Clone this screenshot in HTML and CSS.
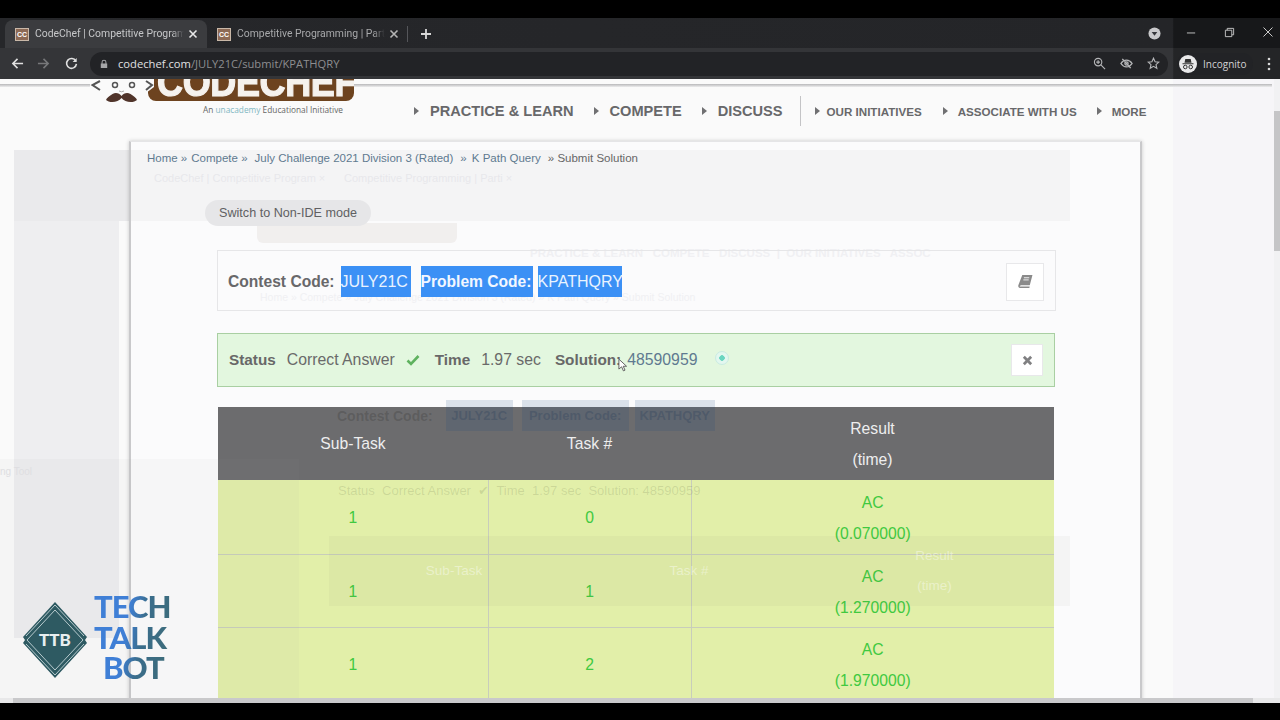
FILE: index.html
```html
<!DOCTYPE html>
<html lang="en">
<head>
<meta charset="utf-8">
<title>CodeChef submission</title>
<link rel="stylesheet" href="styles.css">
</head>
<body>
<div class="screen">
  <div class="topblack"></div>
  <div class="tabstrip">
    <div class="tab active">
      <span class="favicon">CC</span>
      <span class="tabtitle">CodeChef | Competitive Program</span>
      <svg class="tabx" viewBox="0 0 10 10"><path d="M1.500 1.500l7 7M8.500 1.500l-7 7"/></svg>
    </div>
    <div class="tab second">
      <span class="favicon">CC</span>
      <span class="tabtitle dim">Competitive Programming | Parti</span>
      <svg class="tabx dimx" viewBox="0 0 10 10"><path d="M1.500 1.500l7 7M8.500 1.500l-7 7"/></svg>
    </div>
    <span class="tabsep"></span>
    <svg class="newtab" viewBox="0 0 12 12"><path d="M6 1v10M1 6h10"/></svg>
    <span class="stripfill"></span>
    <svg class="downcirc" viewBox="0 0 14 14"><circle cx="7" cy="7" r="6.500"/><path d="M4 5.500h6l-3 4z"/></svg>
    <div class="winctl">
      <svg viewBox="0 0 12 12"><path d="M1 6.500h9"/></svg>
      <svg viewBox="0 0 12 12"><path d="M1.500 3.500h7v7h-7zM3.500 3.500v-2h7v7h-2"/></svg>
      <svg viewBox="0 0 12 12"><path d="M1.500 1.500l9 9M10.500 1.500l-9 9"/></svg>
    </div>
  </div>
  <div class="toolbar">
    <svg class="tbicon back" viewBox="0 0 14 14"><path d="M13 7H2M7 2L2 7l5 5"/></svg>
    <svg class="tbicon fwd" viewBox="0 0 14 14"><path d="M1 7h11M7 2l5 5-5 5"/></svg>
    <svg class="tbicon reload" viewBox="0 0 14 14"><path d="M11.600 4.200A5.300 5.300 0 1 0 12.300 7.500"/><path class="fillp" d="M12.600 1v4.400H8.200z"/></svg>
    <div class="omnibox">
      <svg class="lock" viewBox="0 0 10 12"><path d="M2 5.500V3.600a3 3 0 0 1 6 0v1.900h1V11H1V5.500zM3.200 5.500h3.600V3.600a1.800 1.800 0 0 0-3.600 0z"/></svg>
      <span class="url"><span class="host">codechef.com</span>/JULY21C/submit/KPATHQRY</span>
      <span class="stripfill"></span>
      <svg class="omicon" viewBox="0 0 14 14"><circle cx="5.500" cy="5.500" r="4"/><path d="M8.500 8.500L13 13M3.500 5.500h4M5.500 3.500v4"/></svg>
      <svg class="omicon thick" viewBox="0 0 14 14"><path d="M1 7s2.300-3.600 6-3.600S13 7 13 7s-2.300 3.600-6 3.600S1 7 1 7zM2.500 2l9 10"/><circle cx="7" cy="7" r="1.700"/></svg>
      <svg class="omicon" viewBox="0 0 14 14"><path d="M7 1.300l1.700 3.800 4 .4-3 2.700.9 4L7 10.100l-3.600 2.100.9-4-3-2.700 4-.4z"/></svg>
    </div>
    <div class="incog">
      <svg viewBox="0 0 18 18"><circle cx="9" cy="9" r="9" class="incbg"/><path class="incfg" d="M3.500 8.200h11v1h-11zM5.500 7.700L6.300 4h5.400l.8 3.700z"/><circle class="incring" cx="6.300" cy="12" r="1.800"/><circle class="incring" cx="11.700" cy="12" r="1.800"/></svg>
      <span>Incognito</span>
    </div>
    <svg class="kebab" viewBox="0 0 4 14"><circle cx="2" cy="2" r="1.300"/><circle cx="2" cy="7" r="1.300"/><circle cx="2" cy="12" r="1.300"/></svg>
  </div>

  <div class="viewport">
    <div class="ghosts">
      <div class="g-column"></div>
      <div class="g-right"></div>
      <div class="g-browser">
        <span class="g-t1">CodeChef | Competitive Program ×</span>
        <span class="g-t2">Competitive Programming | Parti ×</span>
      </div>
      <span class="g-lefttext">ng Tool</span>
      <div class="g-logo"></div>
      <span class="g-nav">PRACTICE &amp; LEARN &nbsp; COMPETE &nbsp; DISCUSS &nbsp;| &nbsp;OUR INITIATIVES &nbsp; ASSOC</span>
      <span class="g-crumb">Home » Compete » July Challenge 2021 Division 3 (Rated) » K Path Query » Submit Solution</span>
    </div>

    <div class="page">
      <header class="sitehead">
        <div class="logo">
          <div class="logobar"><span>CODECHEF</span></div>
          <svg class="chef" viewBox="0 0 70 32">
            <path class="chefw" d="M2 0H66V8L58 14 52 26H14L8 14 2 8Z"/>
            <path class="chefd" d="M12 2L4.500 6 12 11M58 2L64 6 58 11"/>
            <circle class="chefd" cx="27" cy="6" r="2.500"/><circle class="chefd" cx="44" cy="6" r="2.500"/>
            <path class="chefn" d="M31 12q2.500 1.500 5 0"/>
            <path class="chefb" d="M33.500 17c-2-3-6-4-9-2-3 2-6 4-6.500 6 3 3 12 3 15.500-2 3.500 5 12.500 5 15.500 2-.5-2-3.500-4-6.500-6-3-2-7-1-9 2z"/>
          </svg>
          <div class="tagline">An <span class="una">unacademy</span> Educational Initiative</div>
        </div>
        <nav class="mainnav">
          <a class="big n1">PRACTICE &amp; LEARN</a>
          <a class="big n2">COMPETE</a>
          <a class="big n3">DISCUSS</a>
          <span class="navdiv"></span>
          <a class="small n4">OUR INITIATIVES</a>
          <a class="small n5">ASSOCIATE WITH US</a>
          <a class="small n6">MORE</a>
        </nav>
      </header>

      <main class="card">
        <div class="crumbs"><span class="c c1">Home »</span><span class="c c2">Compete »</span><span class="c c3">July Challenge 2021 Division 3 (Rated)</span><span class="c c4">»</span><span class="c c5">K Path Query</span><span class="c c6">» Submit Solution</span></div>
        <button class="pill">Switch to Non-IDE mode</button>
        <section class="codebox">
          <b class="lbl">Contest Code:</b>
          <span class="sel v1">JULY21C</span>
          <b class="sel v2">Problem Code:</b>
          <span class="sel v3">KPATHQRY</span>
          <span class="stripfill"></span>
          <span class="sqbtn big-sq">
            <svg viewBox="0 0 14 14"><path class="bookb" d="M4 1h9.500l-2.500 9.500H3c-1 0-1.500.8-1.300 1.200h9.200l-.3 1.300H2c-1.500 0-2-1.300-1.700-2.500z"/><path class="bookl" d="M5.500 3.500h5M5 5.500h5"/></svg>
          </span>
        </section>
        <section class="statusbox">
          <b>Status</b><span class="sv1">Correct Answer</span>
          <svg class="tick" viewBox="0 0 14 12"><path d="M1.500 6.500l3.500 3.500 7.500-8"/></svg>
          <b class="s2">Time</b><span class="sv2">1.97 sec</span>
          <b class="s3">Solution:</b><span class="sol">48590959</span>
          <span class="dot"></span>
          <span class="stripfill"></span>
          <span class="sqbtn x-sq"><svg viewBox="0 0 12 12"><path d="M2 2l8 8M10 2l-8 8"/></svg></span>
        </section>
        <table class="results">
          <thead><tr><th class="w1">Sub-Task</th><th class="w2">Task #</th><th>Result<br>(time)</th></tr></thead>
          <tbody>
            <tr class="r1"><td>1</td><td>0</td><td>AC<br>(0.070000)</td></tr>
            <tr><td>1</td><td>1</td><td>AC<br>(1.270000)</td></tr>
            <tr><td>1</td><td>2</td><td>AC<br>(1.970000)</td></tr>
          </tbody>
        </table>
      </main>
    </div>

    <div class="ghosts top">
      <div class="g-band"></div>
      <div class="g-code"><b>Contest Code:</b><i class="i1">JULY21C</i><i class="i2">Problem Code:</i><i class="i3">KPATHQRY</i></div>
      <span class="g-status">Status &nbsp;Correct Answer &nbsp;✔ &nbsp;Time &nbsp;1.97 sec &nbsp;Solution: 48590959</span>
      <div class="g-thead"><span>Sub-Task</span><span>Task #</span><span>Result<br>(time)</span></div>
    </div>

    <svg class="cursor" viewBox="0 0 10 15"><path d="M1 1v11l3-2.500 2 4.500 1.800-.8-2-4.300H9.500z"/></svg>
    <div class="vscroll"><span class="thumb"></span></div>
    <div class="brand">
      <svg class="diamond" viewBox="0 0 64 76">
        <path class="dfill" d="M32 0L64 35 62 38 64 41 32 76 0 41 2 38 0 35Z"/>
        <path class="dline" d="M32 8L60 38 32 68 4 38ZM3 34L32 3 61 34M3 42L32 73 61 42"/>
      </svg>
      <span class="dtext">TTB</span>
      <div class="brandtext"><span>TECH</span><span>TALK</span><span class="bot">BOT</span></div>
    </div>
  </div>
  <div class="hscroll"><span class="hthumb"></span></div>
  <div class="botblack"></div>
</div>
</body>
</html>
```
FILE: styles.css
```css
* { box-sizing: border-box; }
html, body { margin: 0; height: 100%; background: #000; overflow: hidden; }
body { font-family: "Liberation Sans", Arial, sans-serif; }
.screen { width: 1280px; height: 720px; display: flex; flex-direction: column; position: relative; overflow: hidden; }
.topblack { height: 18px; background: #000; flex: none; }
.botblack { height: 17px; background: #000; flex: none; }
.stripfill { flex: 1; }

.tabstrip { height: 30px; flex: none; background: linear-gradient(90deg, #26272a, #242528 91.600%, #17181a 91.700%); display: flex; align-items: flex-end; padding-left: 5px; }
.tab { width: 202px; height: 28px; display: flex; align-items: center; padding: 0 9px 0 10px; border-radius: 8px 8px 0 0; }
.tab.active { background: #3b3c3f; }
.tab.second { width: 200px; padding-right: 8px; }
.favicon { width: 14px; height: 13px; background: #8d6a55; border: 1px solid #c9b8a8; color: #fff; font: bold 7px/11px "Liberation Sans", sans-serif; text-align: center; flex: none; }
.tabtitle { margin-left: 6px; font: 10.400px/14px Roboto, sans-serif; color: #c6c7c9; white-space: nowrap; overflow: hidden; flex: 1; -webkit-mask-image: linear-gradient(90deg, #000 92%, transparent); mask-image: linear-gradient(90deg, #000 92%, transparent); }
.tabtitle.dim { color: #a8a9ab; }
.tabx { width: 10px; height: 10px; flex: none; margin-left: 4px; fill: none; stroke: #e8e8e8; stroke-width: 1.600; }
.tabx.dimx { stroke: #b5b5b5; }
.tabsep { width: 1px; height: 16px; background: #55565a; margin: 0 0 6px 0; }
.newtab { width: 12px; height: 12px; margin: 0 0 8px 12px; fill: none; stroke: #d8d8d8; stroke-width: 1.800; }
.downcirc { width: 13px; height: 13px; margin-bottom: 8px; fill: #c9c9cb; flex: none; }
.downcirc path { fill: #35363a; }
.winctl { display: flex; width: 107px; margin-left: 12px; justify-content: space-between; padding: 0 6px 2px 13px; height: 30px; align-items: center; flex: none; }
.winctl svg { width: 11px; height: 11px; fill: none; stroke: #c9c9c9; stroke-width: 1; }
.winctl svg:last-child { width: 12px; height: 12px; }

.toolbar { height: 31px; flex: none; background: linear-gradient(90deg, #343538, #343538 91.600%, #242527 91.700%); display: flex; align-items: center; padding-left: 11px; }
.tbicon { width: 13px; height: 13px; fill: none; stroke: #e0e0e0; stroke-width: 1.700; flex: none; }
.tbicon.fwd { margin-left: 13px; stroke: #77787a; }
.tbicon.reload { margin-left: 15px; }
.tbicon .fillp { fill: #e0e0e0; stroke: none; }
.omnibox { width: 1078px; height: 24px; margin-left: 12px; border-radius: 12px; background: #222326; display: flex; align-items: center; padding: 0 8px 0 10px; flex: none; }
.lock { width: 8px; height: 10px; fill: #a5a6a8; flex: none; }
.url { margin-left: 10px; font: 11.200px/16px "Open Sans", sans-serif; color: #8d8e90; white-space: nowrap; }
.host { color: #e0e0e2; }
.omicon { width: 13px; height: 13px; fill: none; stroke: #b5b6b8; stroke-width: 1.200; margin-left: 14px; flex: none; }
.omicon.thick { stroke-width: 1.500; }
.incog { width: 76px; height: 22px; margin-left: 9px; border-radius: 11px; background: #222326; display: flex; align-items: center; padding-left: 2px; color: #d2d2d4; font: 10px/14px "Open Sans", sans-serif; flex: none; }
.incog svg { width: 18px; height: 18px; margin-right: 6px; flex: none; }
.incbg { fill: #e9e9ea; }
.incfg { fill: #333; }
.incring { fill: none; stroke: #333; stroke-width: 1; }
.kebab { width: 4px; height: 14px; margin-left: 14px; fill: #d8d8d8; flex: none; }

.viewport { flex: 1; min-height: 0; position: relative; overflow: hidden; background: #fafafa; }
.page { position: relative; z-index: 2; height: 100%; overflow: hidden; }

.sitehead { height: 62px; display: flex; align-items: flex-start; position: relative; }
.sitehead::before { content: ""; position: absolute; left: 0; right: 8px; top: 5px; height: 3px; background: linear-gradient(#b8b8ba, #ececed); }
.logo { position: relative; width: 270px; margin-left: 88px; height: 40px; flex: none; }
.chef { position: absolute; left: 0; top: 0; width: 70px; height: 32px; }
.chefw { fill: #fafafa; }
.chefd { fill: none; stroke: #555; stroke-width: 2; }
circle.chefd { fill: #fff; stroke-width: 1.500; }
.chefn { fill: none; stroke: #aaa; stroke-width: 1; }
.chefb { fill: #50342a; }
.logobar { position: absolute; left: 60px; top: 0; width: 206px; height: 22px; background: #6d431f; border-radius: 0 0 8px 8px; overflow: hidden; }
.logobar span { position: absolute; left: 9px; top: -17px; font: 900 40px/40px "Liberation Sans", sans-serif; color: #f5f2ee; letter-spacing: -.4px; white-space: nowrap; -webkit-text-stroke: 1.200px #f5f2ee; transform: scaleX(.9); transform-origin: left; }
.tagline { position: absolute; left: 115px; top: 25px; font: 8.300px/12px "Open Sans", sans-serif; color: #666; white-space: nowrap; }
.una { color: #7fb7c2; }

.mainnav { position: relative; display: flex; align-items: center; height: 30px; margin: 17px 0 0 56px; color: #68686a; font-weight: bold; white-space: nowrap; }
.mainnav a { display: flex; align-items: center; }
.mainnav a::before { content: ""; border-left: 5px solid #707072; border-top: 4px solid transparent; border-bottom: 4px solid transparent; margin-right: 11px; }
.big { font-size: 14.600px; }
.small { font-size: 11.600px; }
.n2 { margin-left: 20px; }
.n3 { margin-left: 20px; }
.navdiv { width: 1px; height: 30px; background: #c4c4c6; margin: 0 14px 0 17px; }
.n5 { margin-left: 21px; }
.n6 { margin-left: 20px; }
.mainnav .n4::before { margin-right: 7px; }
.mainnav .n5::before, .mainnav .n6::before { margin-right: 10px; }

.card { position: relative; width: 1013px; margin: 0 0 0 129px; padding: 5px 86px 0 87px; height: 700px; background: rgba(252,252,253,.55); border: solid #c9c9cb; border-width: 1px 2px 0 2px; border-top-color: #e5e5e7; box-shadow: 0 0 4px rgba(0,0,0,.2); }
.crumbs { position: relative; margin-left: -71px; height: 22px; display: flex; align-items: center; font-size: 11.500px; color: #5f7a90; white-space: nowrap; }
.c2 { margin-left: 4px; }
.c3 { margin-left: 7px; }
.c4 { margin-left: 7px; }
.c5 { margin-left: 5px; }
.c6 { margin-left: 7px; color: #666; }
.pill { display: block; width: 166px; height: 26px; margin: 31px 0 0 -13px; border: 0; border-radius: 13px; background: #e6e6e8; color: #606062; font: 12.600px/26px "Liberation Sans", sans-serif; padding: 0; }
.codebox { width: 839px; height: 61px; margin: 24px 0 0 -1px; border: 1px solid #e6e6e8; display: flex; align-items: center; padding: 2px 11px 0 10px; color: #666; font-size: 16px; white-space: nowrap; }
.lbl { margin-right: 6px; color: #68686a; font-size: 15.600px; }
.sel { background: #3b90f5; color: #e9f3ff; height: 31px; line-height: 31px; }
.v1 { width: 70px; font-size: 16px; overflow: hidden; }
.v2 { margin-left: 10px; width: 112px; font-size: 15.600px; color: #f2f7ff; }
.v3 { margin-left: 5px; width: 84px; font-size: 16px; overflow: hidden; }
.sqbtn { background: #fff; border: 1px solid #e8e8ea; display: flex; align-items: center; justify-content: center; flex: none; }
.big-sq { width: 38px; height: 38px; }
.big-sq svg { width: 15px; height: 15px; }
.bookb { fill: #8a8a8a; }
.bookl { fill: none; stroke: #fff; stroke-width: .8; }
.statusbox { width: 838px; height: 54px; margin: 22px 0 0 -1px; background: #e3f7df; border: 1px solid #a9cfa2; display: flex; align-items: center; padding: 0 11px 0 11px; color: #6a6a6a; font-size: 15.800px; white-space: nowrap; }
.statusbox b { color: #686868; font-size: 15.300px; }
.sv1 { margin-left: 11px; }
.tick { width: 14px; height: 12px; margin-left: 11px; fill: none; stroke: #5fb25f; stroke-width: 2.600; flex: none; }
.s2 { margin-left: 15px; }
.sv2 { margin-left: 11px; }
.statusbox .s3 { margin-left: 14px; }
.sol { margin-left: 6px; color: #5f7a90; font-size: 15.800px; }
.dot { width: 14px; height: 14px; border-radius: 50%; margin: -5px 0 0 18px; border: 1px solid #c9ebe2; background: radial-gradient(circle, #6ad5c0 0 2.500px, #e3f7ef 3px); flex: none; }
.x-sq { width: 32px; height: 32px; }
.x-sq svg { width: 11px; height: 11px; fill: none; stroke: #808082; stroke-width: 3; }

.results { width: 836px; margin: 20px 0 0 0; border-collapse: collapse; table-layout: fixed; font-size: 15.700px; text-align: center; }
.results th { background: #6c6c6e; color: #eee; font-weight: normal; height: 73px; line-height: 31px; padding: 0; }
.w1 { width: 270px; }
.w2 { width: 203px; }
.results td { background: #e2efa9; color: #40c940; height: 73px; line-height: 31px; padding: 2px 0 0; border: 1px solid #c8cdbb; border-top: 0; }
.results .r1 td { height: 74px; }
.results td:first-child { border-left: 0; }
.results td:last-child { border-right: 0; }

.ghosts { position: absolute; inset: 0; z-index: 1; pointer-events: none; }
.ghosts.top { z-index: 3; }
.g-column { position: absolute; left: 14px; top: 142px; width: 105px; height: 417px; background: #eeeef0; }
.g-right { position: absolute; left: 1173px; top: 0; right: 0; bottom: 0; background: #f6f5f8; }
.g-browser { position: absolute; left: 14px; top: 71px; width: 1056px; height: 71px; background: rgba(210,210,214,.4); font-size: 11px; color: #cfcfd4; white-space: nowrap; }
.g-t1 { position: absolute; left: 140px; top: 22px; }
.g-t2 { position: absolute; left: 330px; top: 22px; }
.g-band { position: absolute; left: 0; top: 380px; width: 299px; height: 240px; background: rgba(150,150,155,.05); }
.g-lefttext { position: absolute; left: 0; top: 387px; font-size: 10px; color: #e2e2e5; }
.g-logo { position: absolute; left: 257px; top: 144px; width: 200px; height: 20px; border-radius: 0 0 6px 6px; background: rgba(120,90,70,.16); }
.g-nav { position: absolute; left: 530px; top: 167px; font: bold 11.500px/14px "Liberation Sans", sans-serif; color: #e2e2e6; white-space: nowrap; }
.g-crumb { position: absolute; left: 260px; top: 212px; font-size: 10.500px; color: #e2e2e6; white-space: nowrap; }
.g-code { position: absolute; left: 337px; top: 321px; display: flex; align-items: center; font-size: 14px; color: rgba(60,60,60,.32); white-space: nowrap; }
.g-code i { font-style: normal; display: block; background: rgba(20,70,130,.14); height: 31px; line-height: 31px; text-align: center; color: rgba(40,60,90,.3); font-weight: bold; font-size: 13px; overflow: hidden; }
.i1 { width: 67px; margin-left: 13px; }
.i2 { width: 107px; margin-left: 9px; }
.i3 { width: 80px; margin-left: 6px; }
.g-status { position: absolute; left: 338px; top: 404px; font-size: 13px; color: rgba(80,90,60,.16); white-space: nowrap; }
.g-thead { position: absolute; left: 329px; top: 457px; width: 741px; height: 70px; background: rgba(110,110,100,.05); display: grid; grid-template-columns: 250px 220px 1fr; align-items: center; text-align: center; color: rgba(255,255,255,.42); font-size: 13.500px; line-height: 30px; }

.cursor { position: absolute; left: 618px; top: 279px; width: 9px; height: 14px; z-index: 4; fill: #fff; stroke: #555; stroke-width: 1; }
.vscroll { position: absolute; right: 0; top: 0; width: 6px; height: 100%; background: #f1f1f3; z-index: 4; }
.thumb { display: block; margin-top: 32px; height: 140px; background: #c5c5c7; }
.hscroll { height: 5px; flex: none; background: #e8e8e9; padding-left: 13px; }
.hthumb { display: block; width: 1240px; height: 100%; background: #c9c9cb; }

.brand { position: absolute; left: 23px; top: 512px; width: 150px; height: 88px; z-index: 5; }
.diamond { position: absolute; left: 0; top: 11px; width: 64px; height: 76px; }
.dfill { fill: #2e5a62; }
.dline { fill: none; stroke: #d9e6e8; stroke-width: .8; }
.dtext { position: absolute; left: 0; top: 39px; width: 64px; text-align: center; font: 900 17px/20px Lato, sans-serif; color: #e8eff0; }
.brandtext { position: absolute; left: 71px; top: 0; width: 80px; display: flex; flex-direction: column; align-items: flex-start; font: 900 31px/30.500px Lato, sans-serif; letter-spacing: -1px; background: linear-gradient(100deg, #3f7fd6 0, #3f7fd6 40%, #3a6d8c 58%, #3e6b72 100%); -webkit-background-clip: text; background-clip: text; color: transparent; }
.brandtext .bot { margin-left: 9px; }
```
